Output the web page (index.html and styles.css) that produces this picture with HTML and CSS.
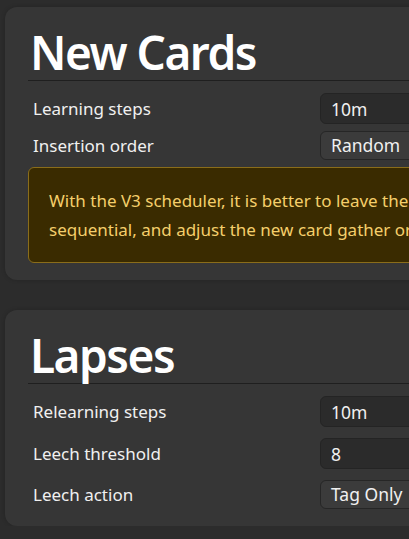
FILE: index.html
```html
<!DOCTYPE html>
<html lang="en">
<head>
    <meta charset="UTF-8">
    <title>Deck Options</title>
    <link rel="stylesheet" href="styles.css">
</head>
<body>
    <div class="page">
        <div class="card">
            <h1>New Cards</h1>
            <div class="row">
                <span class="label">Learning steps</span>
                <div class="field input">10m</div>
            </div>
            <div class="row">
                <span class="label">Insertion order</span>
                <div class="field select">Random</div>
            </div>
            <div class="warning">
                With the V3 scheduler, it is better to leave the insertion order<br>
                sequential, and adjust the new card gather order instead.
            </div>
        </div>
        <div class="card">
            <h1>Lapses</h1>
            <div class="row">
                <span class="label">Relearning steps</span>
                <div class="field input">10m</div>
            </div>
            <div class="row spaced">
                <span class="label">Leech threshold</span>
                <div class="field input">8</div>
            </div>
            <div class="row spaced">
                <span class="label">Leech action</span>
                <div class="field select">Tag Only</div>
            </div>
        </div>
    </div>
</body>
</html>
```

FILE: styles.css
```css
body {
    margin: 0;
    padding: 0;
    background-color: #2c2c2c;
    color: #f0f0f0;
    font-family: "Noto Sans", "Open Sans", sans-serif;
    overflow: hidden;
}
.page {
    padding: 7px 0 0 5px;
    width: 700px;
    display: flex;
    flex-direction: column;
    gap: 30px;
}
.card {
    background-color: #363636;
    border-radius: 12px;
    padding: 18px 0 17px 23px;
    box-shadow: 0 0 4px rgba(0, 0, 0, 0.2);
}
h1 {
    margin: 0 0 12px 0;
    font-size: 46px;
    font-weight: 600;
    letter-spacing: -1.5px;
    line-height: 55px;
    color: #fff;
    padding-left: 2px;
    border-bottom: 1px solid #1f1f1f;
}
.row {
    display: flex;
    align-items: center;
    margin-bottom: 7px;
}
.row:last-child {
    margin-bottom: 0;
}
.row.spaced {
    margin-top: 11px;
}
.label {
    width: 287px;
    padding-left: 5px;
    font-size: 17px;
}
.field {
    flex: 1;
    box-sizing: border-box;
    border-radius: 6px;
    padding: 0 10px;
    font-size: 17.5px;
}
.input {
    height: 31px;
    line-height: 31px;
    background-color: #2b2b2b;
    border: 1px solid #242424;
}
.select {
    height: 29px;
    line-height: 27px;
    background-color: #3b3b3b;
    border: 1px solid #262626;
}
.warning {
    margin-top: 0;
    background-color: #3a2b00;
    border: 1px solid #8a6d1a;
    border-radius: 6px;
    padding: 18px 20px;
    color: #f5cf6b;
    font-size: 17px;
    line-height: 29px;
    white-space: nowrap;
}
```
